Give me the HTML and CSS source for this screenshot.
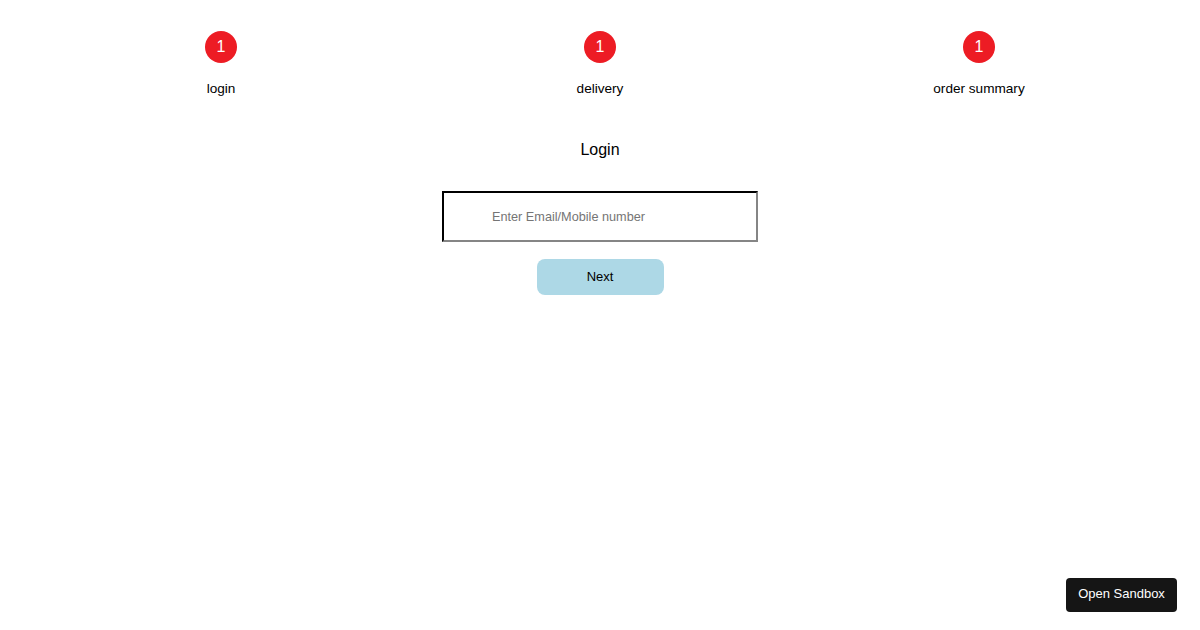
FILE: index.html
```html
<!DOCTYPE html>
<html lang="en">
<head>
    <meta charset="UTF-8">
    <meta name="viewport" content="width=device-width, initial-scale=1.0">
    <title>Checkout</title>
    <link rel="stylesheet" href="styles.css">
</head>
<body>
    <div class="steps">
        <div class="step">
            <div class="step-number">1</div>
            <div class="step-label">login</div>
        </div>
        <div class="step">
            <div class="step-number">1</div>
            <div class="step-label">delivery</div>
        </div>
        <div class="step">
            <div class="step-number">1</div>
            <div class="step-label">order summary</div>
        </div>
    </div>

    <div class="login">
        <h2 class="login-title">Login</h2>
        <input type="text" class="login-input" placeholder="Enter Email/Mobile number">
        <button class="next">Next</button>
    </div>

    <a class="sandbox" href="#">Open Sandbox</a>
</body>
</html>
```

FILE: styles.css
```css
* {
    box-sizing: border-box;
}
body {
    margin: 8px;
    font-family: "Liberation Sans", Arial, sans-serif;
    color: #000;
    background: #fff;
}
.steps {
    display: flex;
    justify-content: space-evenly;
    padding-top: 23px;
}
.step {
    width: 332px;
    display: flex;
    flex-direction: column;
    align-items: center;
}
.step-number {
    width: 32px;
    height: 32px;
    border-radius: 50%;
    background: #ed1c24;
    color: #fff;
    font-size: 16px;
    display: flex;
    justify-content: center;
    align-items: center;
}
.step-label {
    margin-top: 18px;
    font-size: 13.6px;
    line-height: 16px;
}
.login {
    display: flex;
    flex-direction: column;
    align-items: center;
}
.login-title {
    margin: 43px 0 0;
    font-size: 16px;
    font-weight: normal;
    line-height: 20px;
}
.login-input {
    margin-top: 31px;
    width: 316px;
    height: 51px;
    padding: 0 0 0 48px;
    border: 2px inset #767676;
    border-color: #1a1a1a #858585 #858585 #1a1a1a;
    font-family: "Liberation Sans", Arial, sans-serif;
    font-size: 12.7px;
    outline: none;
}
.login-input::placeholder {
    color: #757575;
}
.next {
    margin-top: 17px;
    width: 127px;
    height: 36px;
    padding: 0 0 2px;
    border: none;
    border-radius: 8px;
    background: #add8e6;
    color: #000;
    font-family: "Liberation Sans", Arial, sans-serif;
    font-size: 13px;
    cursor: pointer;
}
.sandbox {
    position: fixed;
    right: 23px;
    bottom: 18px;
    width: 111px;
    height: 34px;
    padding-bottom: 3px;
    border-radius: 4px;
    background: #151515;
    color: #fff;
    font-size: 13px;
    text-decoration: none;
    display: flex;
    justify-content: center;
    align-items: center;
}
```
